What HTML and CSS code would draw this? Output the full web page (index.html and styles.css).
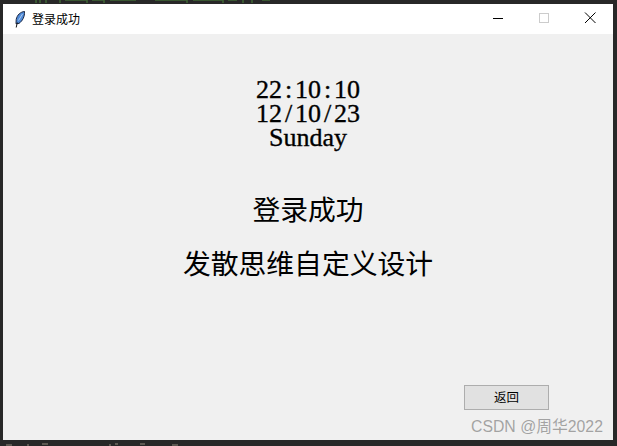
FILE: index.html
```html
<!DOCTYPE html>
<html lang="zh">
<head>
<meta charset="utf-8">
<title>登录成功</title>
<link rel="stylesheet" href="styles.css">
</head>
<body>
<svg class="backdrop" width="617" height="446" viewBox="0 0 617 446" aria-hidden="true">
  <path d="M36 0v3M40 0v3M46 0v3M60 0v3M65 0h22v3M92 0h12v3M110 0h26M155 0h32v3M193 0h30v3M228 0h9M243 0v3M252 0v3M262 0h8" stroke="#3f6535" stroke-width="1.500" fill="none"/>
  <path d="M6 445h6M28 444v2M42 444h6M110 444v2M115 444h3M140 444h5M172 445h6" stroke="#6f6a60" stroke-width="1.500" fill="none"/>
</svg>
<div class="window">
  <header class="titlebar">
    <svg class="feather" width="10" height="17" viewBox="0 0 10 17">
      <path d="M9.600 .5C5.500 .8 2 4 1.200 8.500L1 12.800 4 12.400C7.500 10 9.800 5.500 9.600 .5Z" fill="#4f8ad8" stroke="#1a2540" stroke-width="1"/>
      <path d="M7.500 3 3.500 9.500" fill="none" stroke="#bcd6f2" stroke-width=".9"/>
      <path d="M2.300 11.500 1.200 16.500" fill="none" stroke="#111" stroke-width="1"/>
    </svg>
    <span class="title">登录成功</span>
    <div class="controls">
      <svg class="ctl" width="46" height="30" viewBox="0 0 46 30"><path d="M18 14.500H28" stroke="#000" fill="none"/></svg>
      <svg class="ctl" width="46" height="30" viewBox="0 0 46 30"><rect x="18.500" y="9.500" width="9" height="9" stroke="#ccc" fill="none"/></svg>
      <svg class="ctl" width="46" height="30" viewBox="0 0 46 30"><path d="M18 8.500 28.500 19M28.500 8.500 18 19" stroke="#000" fill="none"/></svg>
    </div>
  </header>
  <main class="client">
    <div class="clock">
      <div class="clock-line">22<span class="cell">:</span>10<span class="cell">:</span>10</div>
      <div class="clock-line">12<span class="cell">/</span>10<span class="cell">/</span>23</div>
      <div class="clock-line">Sunday</div>
    </div>
    <div class="msg first">登录成功</div>
    <div class="msg second">发散思维自定义设计</div>
    <div class="actions"><button class="back">返回</button></div>
  </main>
</div>
<div class="watermark">CSDN @周华2022</div>
</body>
</html>
```
FILE: styles.css
```css
* { box-sizing: border-box; }
html, body { margin: 0; height: 100%; }
body {
  background: #282828;
  padding: 4px 4px 6px 3px;
  overflow: hidden;
  position: relative;
  font-family: "Liberation Serif", "Noto Sans CJK SC", serif;
}
.backdrop { position: absolute; left: 0; top: 0; }
.window { position: relative; width: 610px; height: 436px; display: flex; flex-direction: column; background: #f0f0f0; }
.titlebar { height: 30px; background: #fff; display: flex; align-items: center; padding-left: 12px; }
.feather { margin-right: 7px; }
.title { font: 12px "Noto Sans CJK SC", sans-serif; color: #000; margin-bottom: 2px; }
.controls { margin-left: auto; display: flex; }
.ctl { display: block; }
.client { flex: 1; display: flex; flex-direction: column; align-items: center; padding-top: 44px; }
.clock { font-size: 26px; color: #000; -webkit-text-stroke: .35px #000; }
.clock-line { height: 24px; line-height: 24px; text-align: center; white-space: nowrap; }
.cell { display: inline-block; width: 13px; text-align: center; }
.msg { font: 27.800px/40px "Noto Sans CJK SC", sans-serif; color: #000; }
.first { margin-top: 38px; }
.second { margin-top: 14px; }
.actions { margin-top: auto; align-self: stretch; display: flex; justify-content: flex-end; padding: 0 64px 30px 0; }
.back {
  width: 85px; height: 25px; padding: 0 0 2px;
  background: #e1e1e1; border: 1px solid #adadad; border-radius: 0;
  font: 12.500px "Noto Sans CJK SC", sans-serif; color: #000;
}
.watermark {
  position: absolute; left: 471px; top: 417px;
  font: 15.800px/20px "Liberation Sans", "Noto Sans CJK SC", sans-serif;
  color: rgba(110,110,110,.6); white-space: nowrap;
}
```
